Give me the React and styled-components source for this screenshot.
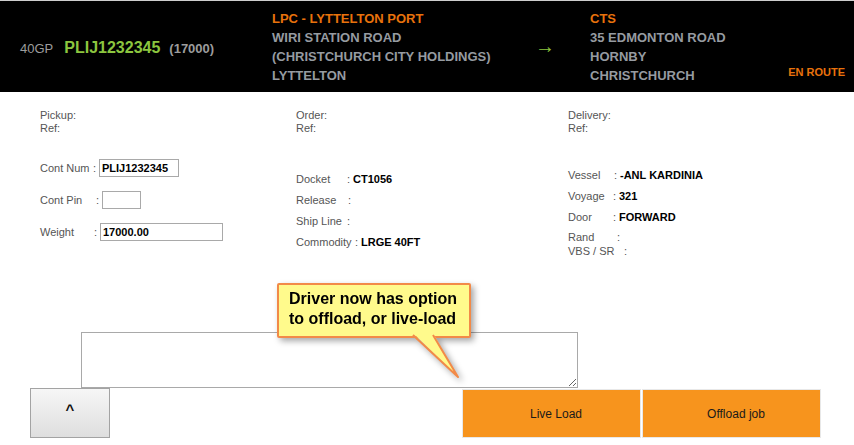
import React from 'react';
import styled, { createGlobalStyle } from 'styled-components';

const GlobalStyle = createGlobalStyle`
  html, body {
    margin: 0;
    padding: 0;
    background: #fff;
    font-family: "Liberation Sans", Arial, sans-serif;
  }
`;

const Page = styled.div`
  position: relative;
  width: 854px;
  height: 445px;
  overflow: hidden;
  background: #fff;
`;

const Header = styled.header`
  display: flex;
  align-items: center;
  height: 91px;
  border-top: 1px solid #cdcdcd;
  background: #000;
`;

const Container = styled.div`
  display: flex;
  align-items: baseline;
  width: 252px;
  padding-left: 20px;
  margin-top: 2px;

  .size {
    color: #9c9c9c;
    font-size: 13px;
    margin-right: 11px;
  }

  .number {
    color: #8cc63f;
    font-size: 16px;
    font-weight: bold;
    margin-right: 9px;
  }

  .weight {
    color: #9c9c9c;
    font-size: 13px;
    font-weight: bold;
  }
`;

const Place = styled.div`
  width: ${({ width }) => width}px;
  font-size: 13px;
  font-weight: bold;
  line-height: 19px;
  color: #969ba1;

  .place__name {
    color: #e8720c;
  }
`;

const Arrow = styled.div`
  width: 55px;
  color: #8cc63f;
  font-size: 20px;
`;

const Status = styled.div`
  align-self: flex-end;
  margin-left: auto;
  margin-right: 9px;
  margin-bottom: 14px;
  color: #e8720c;
  font-size: 11px;
  font-weight: bold;
`;

const Details = styled.section`
  display: flex;
  height: 240px;
  padding: 17px 0 0 40px;
  box-sizing: border-box;
  font-size: 11px;
  color: #555;
`;

const Column = styled.div`
  width: ${({ width }) => width}px;
`;

const Refs = styled.div`
  line-height: 13px;
`;

const InputRows = styled.div`
  display: flex;
  flex-direction: column;
  gap: 14px;
  margin-top: 24px;
`;

const Row = styled.div`
  display: flex;
  align-items: center;
  white-space: nowrap;
  height: ${({ height }) => height}px;

  b {
    color: #000;
  }
`;

const Label = styled.span`
  display: inline-block;
  flex: none;
  width: ${({ width }) => width}px;
`;

const Colon = styled.span`
  flex: none;
  width: 6px;
`;

const Field = styled.div`
  width: ${({ width }) => width}px;
  height: 16px;
  border: 1px solid #a9a9a9;
  padding-left: 2px;
  line-height: 16px;
  color: #000;
  font-weight: bold;
`;

const InfoRows = styled.div`
  margin-top: ${({ offset }) => offset}px;
`;

const TightRows = styled.div`
  margin-top: 3px;
`;

const Notes = styled.textarea`
  display: block;
  width: 497px;
  height: 56px;
  margin: 0 0 0 81px;
  border: 1px solid #a9a9a9;
  box-sizing: border-box;
  padding: 2px;
  font-family: inherit;
`;

const Actions = styled.div`
  display: flex;
  justify-content: space-between;
  align-items: flex-start;
  padding: 0 33px 0 30px;
`;

const UpButton = styled.button`
  width: 80px;
  height: 50px;
  border: 1px solid #a3a3a3;
  background: linear-gradient(#f6f6f6, #dedede);
  font-family: inherit;
  font-size: 15px;
  font-weight: bold;
  color: #111;
  padding: 0 0 8px;
`;

const ActionGroup = styled.div`
  display: flex;
  gap: 1px;
  margin-top: 1px;
`;

const ActionButton = styled.button`
  width: 179px;
  height: 49px;
  border: 1px solid #e8e8e8;
  background: #f7941d;
  font-family: inherit;
  font-size: 12px;
  color: #1a1a1a;
  padding: 0 0 0 ${({ shift }) => shift || 0}px;
`;

const Callout = styled.div`
  position: absolute;
  left: 277px;
  top: 283px;
  filter: drop-shadow(3px 3px 3px rgba(0, 0, 0, 0.35));
`;

const CalloutBox = styled.div`
  width: 180px;
  height: 47px;
  padding: 4px 0 0 10px;
  background: #fffa8c;
  border: 2px solid #f28a48;
  border-radius: 2px;
  font-size: 16px;
  font-weight: bold;
  line-height: 20px;
  color: #000;
  white-space: nowrap;
`;

const CalloutTail = styled.svg`
  position: absolute;
  left: 136px;
  top: 53px;
  overflow: visible;
`;

const placeLines = (lines) => lines.map((line) => <div key={line}>{line}</div>);

const Info = ({ label, width, value, height = 21 }) => (
  <Row height={height}>
    <Label width={width}>{label}</Label>
    <Colon>:</Colon>
    {value && <b>{value}</b>}
  </Row>
);

const App = () => (
  <Page>
    <GlobalStyle />
    <Header>
      <Container>
        <span className="size">40GP</span>
        <span className="number">PLIJ1232345</span>
        <span className="weight">(17000)</span>
      </Container>
      <Place width={263}>
        <div className="place__name">LPC - LYTTELTON PORT</div>
        {placeLines(['WIRI STATION ROAD', '(CHRISTCHURCH CITY HOLDINGS)', 'LYTTELTON'])}
      </Place>
      <Arrow>→</Arrow>
      <Place width={170}>
        <div className="place__name">CTS</div>
        {placeLines(['35 EDMONTON ROAD', 'HORNBY', 'CHRISTCHURCH'])}
      </Place>
      <Status>EN ROUTE</Status>
    </Header>

    <Details>
      <Column width={256}>
        <Refs>
          <div>Pickup:</div>
          <div>Ref:</div>
        </Refs>
        <InputRows>
          <Row height={18}>
            <Label width={53}>Cont Num</Label>
            <Colon>:</Colon>
            <Field width={76}>PLIJ1232345</Field>
          </Row>
          <Row height={18}>
            <Label width={56}>Cont Pin</Label>
            <Colon>:</Colon>
            <Field width={35} />
          </Row>
          <Row height={18}>
            <Label width={54}>Weight</Label>
            <Colon>:</Colon>
            <Field width={119}>17000.00</Field>
          </Row>
        </InputRows>
      </Column>

      <Column width={272}>
        <Refs>
          <div>Order:</div>
          <div>Ref:</div>
        </Refs>
        <InfoRows offset={33}>
          <Info label="Docket" width={51} value="CT1056" />
          <Info label="Release" width={52} />
          <Info label="Ship Line" width={51} />
          <Info label="Commodity" width={59} value="LRGE 40FT" />
        </InfoRows>
      </Column>

      <Column width={250}>
        <Refs>
          <div>Delivery:</div>
          <div>Ref:</div>
        </Refs>
        <InfoRows offset={29}>
          <Info label="Vessel" width={46} value="-ANL KARDINIA" />
          <Info label="Voyage" width={45} value="321" />
          <Info label="Door" width={45} value="FORWARD" />
          <TightRows>
            <Info label="Rand" width={49} height={14} />
            <Info label="VBS / SR" width={56} height={14} />
          </TightRows>
        </InfoRows>
      </Column>
    </Details>

    <Notes />

    <Actions>
      <UpButton>^</UpButton>
      <ActionGroup>
        <ActionButton shift={9}>Live Load</ActionButton>
        <ActionButton shift={9}>Offload job</ActionButton>
      </ActionGroup>
    </Actions>

    <Callout>
      <CalloutBox>
        Driver now has option
        <br />
        to offload, or live-load
      </CalloutBox>
      <CalloutTail width="48" height="42" viewBox="0 0 48 42">
        <polygon points="0,-3 20,-3 45,41" fill="#fffa8c" />
        <polyline points="0,-1 45,41 20,-1" fill="none" stroke="#f28a48" strokeWidth="2" strokeLinejoin="round" />
      </CalloutTail>
    </Callout>
  </Page>
);

export default App;
